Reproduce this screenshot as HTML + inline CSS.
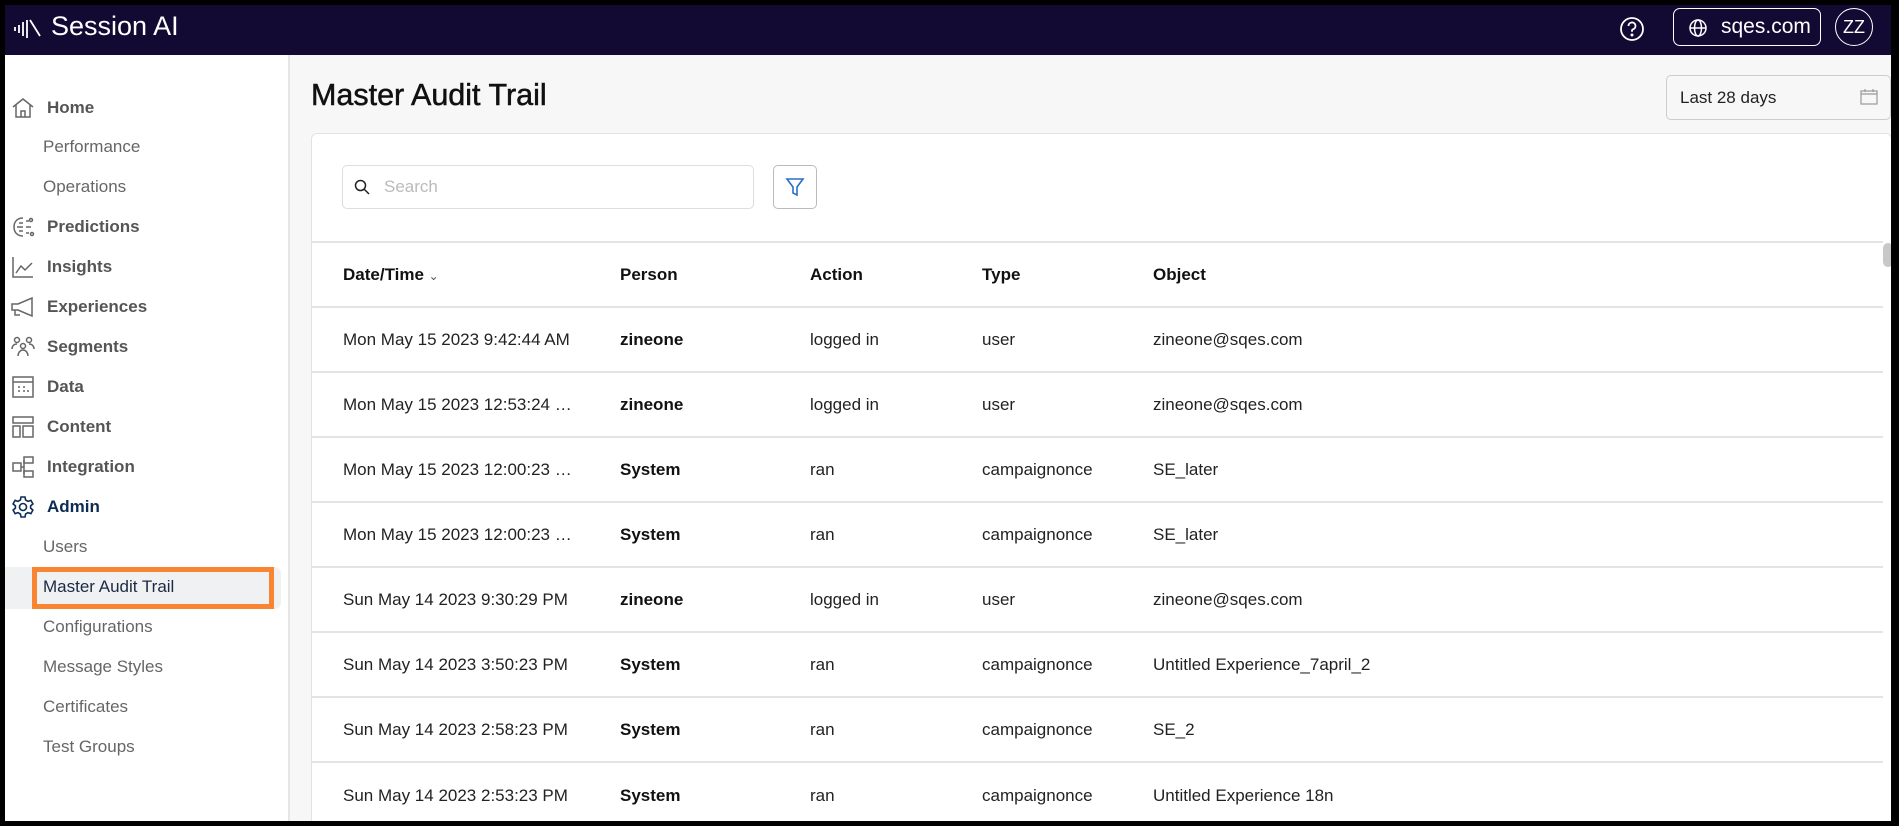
<!DOCTYPE html>
<html><head><meta charset="utf-8"><style>
*{box-sizing:border-box;margin:0;padding:0}
body{width:1899px;height:826px;overflow:hidden;background:#000;font-family:"Liberation Sans",Arial,sans-serif;position:relative}
.frame{position:absolute;left:5px;top:5px;width:1886px;height:816px;background:#f7f7f7;overflow:hidden}
.hdr{position:absolute;left:0;top:0;width:1888px;height:50px;background:#120a33;color:#fff}
.side{position:absolute;left:0;top:50px;width:285px;height:770px;background:#fff;border-right:2px solid #e6e6e6}
.it{position:absolute;left:0;height:30px;display:flex;align-items:center;font-size:17px;color:#555}
.it.b{font-weight:bold;left:6px}
.it.b svg{width:24px;height:24px;margin-right:12px}
.it.s{left:38px;color:#666}
.abs{position:absolute}
.card{position:absolute;left:306px;top:128px;width:1581px;height:700px;background:#fff;border:1px solid #e2e2e2;border-radius:6px}
.row{position:absolute;left:0;width:1571px;height:65px;border-bottom:2px solid #e4e4e4;font-size:17px;color:#222}
.row span{position:absolute;top:50%;transform:translateY(-50%);white-space:nowrap}
.c1{left:31px}.c2{left:308px;font-weight:bold;color:#111}.c3{left:498px}.c4{left:670px}.c5{left:841px}
</style></head><body>
<div class="frame">
<div class="hdr">
 <svg class="abs" style="left:8px;top:12px" width="30" height="24" viewBox="0 0 30 24" fill="none" stroke="#fff" stroke-width="1.8"><path d="M2 10v4M6 8v8M10 5v14M14 3v18M17 3l10 16"/></svg>
 <div class="abs" style="left:46px;top:6px;font-size:27px;color:#fff">Session AI</div>
 <svg class="abs" style="left:1614px;top:11px" width="26" height="26" viewBox="0 0 26 26" fill="none" stroke="#fff" stroke-width="1.8"><circle cx="13" cy="13" r="11"/><path d="M9.5 10a3.5 3.5 0 1 1 4.5 3.3c-.7.3-1 .8-1 1.5v1"/><circle cx="13" cy="19" r=".6" fill="#fff"/></svg>
 <div class="abs" style="left:1668px;top:3px;width:148px;height:38px;border:1.5px solid #fff;border-radius:7px"></div>
 <svg class="abs" style="left:1683px;top:13px" width="20" height="20" viewBox="0 0 20 20" fill="none" stroke="#fff" stroke-width="1.5"><circle cx="10" cy="10" r="8"/><ellipse cx="10" cy="10" rx="3.5" ry="8"/><path d="M2 10h16"/></svg>
 <div class="abs" style="left:1716px;top:10px;font-size:21px">sqes.com</div>
 <div class="abs" style="left:1830px;top:3px;width:38px;height:38px;border:1.5px solid #fff;border-radius:50%;text-align:center;line-height:36px;font-size:18px">ZZ</div>
</div>
<div class="side">
 <div class="abs" style="left:0;top:512px;width:276px;height:42px;background:#f0f1f3;border-radius:0 6px 6px 0"></div>
 <div class="abs" style="left:27px;top:512px;width:242px;height:42px;border:5px solid #f98431"></div>
 <div class="it b" style="top:38px"><svg viewBox="0 0 24 24" fill="none" stroke="#666" stroke-width="1.5"><path d="M2 11L12 3l10 8M5 9v12h14V9M10 21v-6h4v6"/></svg>Home</div>
 <div class="it s" style="top:77px">Performance</div>
 <div class="it s" style="top:117px">Operations</div>
 <div class="it b" style="top:157px"><svg viewBox="0 0 24 24" fill="none" stroke="#666" stroke-width="1.5"><path d="M12 3c-5 0-9 3-9 9s4 9 9 9M8 8h4M6 12h6M8 16h4M15 6h3M15 12h5M15 18h3"/><circle cx="20" cy="5" r="1.5"/><circle cx="21" cy="19" r="1.5"/></svg>Predictions</div>
 <div class="it b" style="top:197px"><svg viewBox="0 0 24 24" fill="none" stroke="#666" stroke-width="1.5"><path d="M2 2v20h20M5 18l5-7 4 4 7-7"/></svg>Insights</div>
 <div class="it b" style="top:237px"><svg viewBox="0 0 24 24" fill="none" stroke="#666" stroke-width="1.5"><path d="M1 9h6l14-6v18L7 15H1zM4 15v5h5"/></svg>Experiences</div>
 <div class="it b" style="top:277px"><svg viewBox="0 0 24 24" fill="none" stroke="#666" stroke-width="1.5"><circle cx="6" cy="5" r="2.5"/><circle cx="18" cy="5" r="2.5"/><circle cx="12" cy="11" r="2.5"/><path d="M1 14c0-3 2-5 5-5M23 14c0-3-2-5-5-5M7 21c0-3 2-6 5-6s5 3 5 6"/></svg>Segments</div>
 <div class="it b" style="top:317px"><svg viewBox="0 0 24 24" fill="none" stroke="#666" stroke-width="1.5"><rect x="2" y="2" width="20" height="20"/><path d="M2 7h20M7 12h2M12 12h2M7 16h2M12 16h2M16 16h2"/></svg>Data</div>
 <div class="it b" style="top:357px"><svg viewBox="0 0 24 24" fill="none" stroke="#666" stroke-width="1.5"><rect x="2" y="2" width="20" height="6"/><rect x="2" y="11" width="7" height="11"/><rect x="12" y="11" width="10" height="11"/></svg>Content</div>
 <div class="it b" style="top:397px"><svg viewBox="0 0 24 24" fill="none" stroke="#666" stroke-width="1.5"><rect x="2" y="8" width="8" height="8"/><rect x="13" y="2" width="9" height="6"/><rect x="13" y="16" width="9" height="6"/><path d="M10 12h3M13 5v14"/></svg>Integration</div>
 <div class="it b" style="top:437px;color:#0d2c54"><svg viewBox="0 0 24 24" fill="none" stroke="#0d2c54" stroke-width="1.6"><circle cx="12" cy="12" r="3.5"/><path d="M10 2h4l.6 3 2.4 1.4 2.9-1 2 3.5-2.3 2v2.2l2.3 2-2 3.5-2.9-1L14.6 19 14 22h-4l-.6-3-2.4-1.4-2.9 1-2-3.5 2.3-2v-2.2L2.1 8.9l2-3.5 2.9 1L9.4 5z"/></svg>Admin</div>
 <div class="it s" style="top:477px">Users</div>
 <div class="it s" style="top:517px;color:#1b2a44">Master Audit Trail</div>
 <div class="it s" style="top:557px">Configurations</div>
 <div class="it s" style="top:597px">Message Styles</div>
 <div class="it s" style="top:637px">Certificates</div>
 <div class="it s" style="top:677px">Test Groups</div>
</div>
<div class="abs" style="left:306px;top:73px;font-size:30.5px;color:#111;-webkit-text-stroke:0.5px #111">Master Audit Trail</div>
<div class="abs" style="left:1661px;top:70px;width:225px;height:45px;border:1px solid #ccc;border-radius:5px;background:#f7f7f7"></div>
<div class="abs" style="left:1675px;top:83px;font-size:17px;color:#222">Last 28 days</div>
<svg class="abs" style="left:1855px;top:84px" width="18" height="16" viewBox="0 0 18 16" fill="none" stroke="#999" stroke-width="1.2"><rect x="1" y="2" width="16" height="13"/><path d="M1 5h16M5 0v3M13 0v3"/></svg>
<div class="card">
 <div class="abs" style="left:30px;top:31px;width:412px;height:44px;border:1px solid #ddd;border-radius:5px"></div>
 <svg class="abs" style="left:42px;top:45px" width="16" height="16" viewBox="0 0 16 16" fill="none" stroke="#222" stroke-width="1.5"><circle cx="6.5" cy="6.5" r="5"/><path d="M10 10l5 5"/></svg>
 <div class="abs" style="left:72px;top:43px;font-size:17px;color:#bbb">Search</div>
 <div class="abs" style="left:461px;top:31px;width:44px;height:44px;border:1px solid #bbb;border-radius:5px"></div>
 <svg class="abs" style="left:473px;top:43px" width="20" height="20" viewBox="0 0 20 20" fill="none" stroke="#2a6fc9" stroke-width="1.6"><path d="M2 2h16l-6 8v8l-4-2v-6z"/></svg>
 <div class="row" style="top:107px;border-top:2px solid #e4e4e4;height:67px;font-weight:bold;color:#111"><span class="c1">Date/Time <span style="position:static;font-weight:normal;font-size:12px;color:#555">&#8964;</span></span><span class="c2">Person</span><span class="c3">Action</span><span class="c4">Type</span><span class="c5">Object</span></div>
 <div class="row" style="top:174px"><span class="c1">Mon May 15 2023 9:42:44 AM</span><span class="c2">zineone</span><span class="c3">logged in</span><span class="c4">user</span><span class="c5">zineone@sqes.com</span></div>
 <div class="row" style="top:239px"><span class="c1">Mon May 15 2023 12:53:24 …</span><span class="c2">zineone</span><span class="c3">logged in</span><span class="c4">user</span><span class="c5">zineone@sqes.com</span></div>
 <div class="row" style="top:304px"><span class="c1">Mon May 15 2023 12:00:23 …</span><span class="c2">System</span><span class="c3">ran</span><span class="c4">campaignonce</span><span class="c5">SE_later</span></div>
 <div class="row" style="top:369px"><span class="c1">Mon May 15 2023 12:00:23 …</span><span class="c2">System</span><span class="c3">ran</span><span class="c4">campaignonce</span><span class="c5">SE_later</span></div>
 <div class="row" style="top:434px"><span class="c1">Sun May 14 2023 9:30:29 PM</span><span class="c2">zineone</span><span class="c3">logged in</span><span class="c4">user</span><span class="c5">zineone@sqes.com</span></div>
 <div class="row" style="top:499px"><span class="c1">Sun May 14 2023 3:50:23 PM</span><span class="c2">System</span><span class="c3">ran</span><span class="c4">campaignonce</span><span class="c5">Untitled Experience_7april_2</span></div>
 <div class="row" style="top:564px"><span class="c1">Sun May 14 2023 2:58:23 PM</span><span class="c2">System</span><span class="c3">ran</span><span class="c4">campaignonce</span><span class="c5">SE_2</span></div>
 <div class="row" style="top:629px;border-bottom:none"><span class="c1">Sun May 14 2023 2:53:23 PM</span><span class="c2">System</span><span class="c3">ran</span><span class="c4">campaignonce</span><span class="c5">Untitled Experience 18n</span></div>
 <div class="abs" style="left:1571px;top:109px;width:10px;height:24px;background:#c8c8c8;border-radius:5px"></div>
</div>
</div>
</body></html>
